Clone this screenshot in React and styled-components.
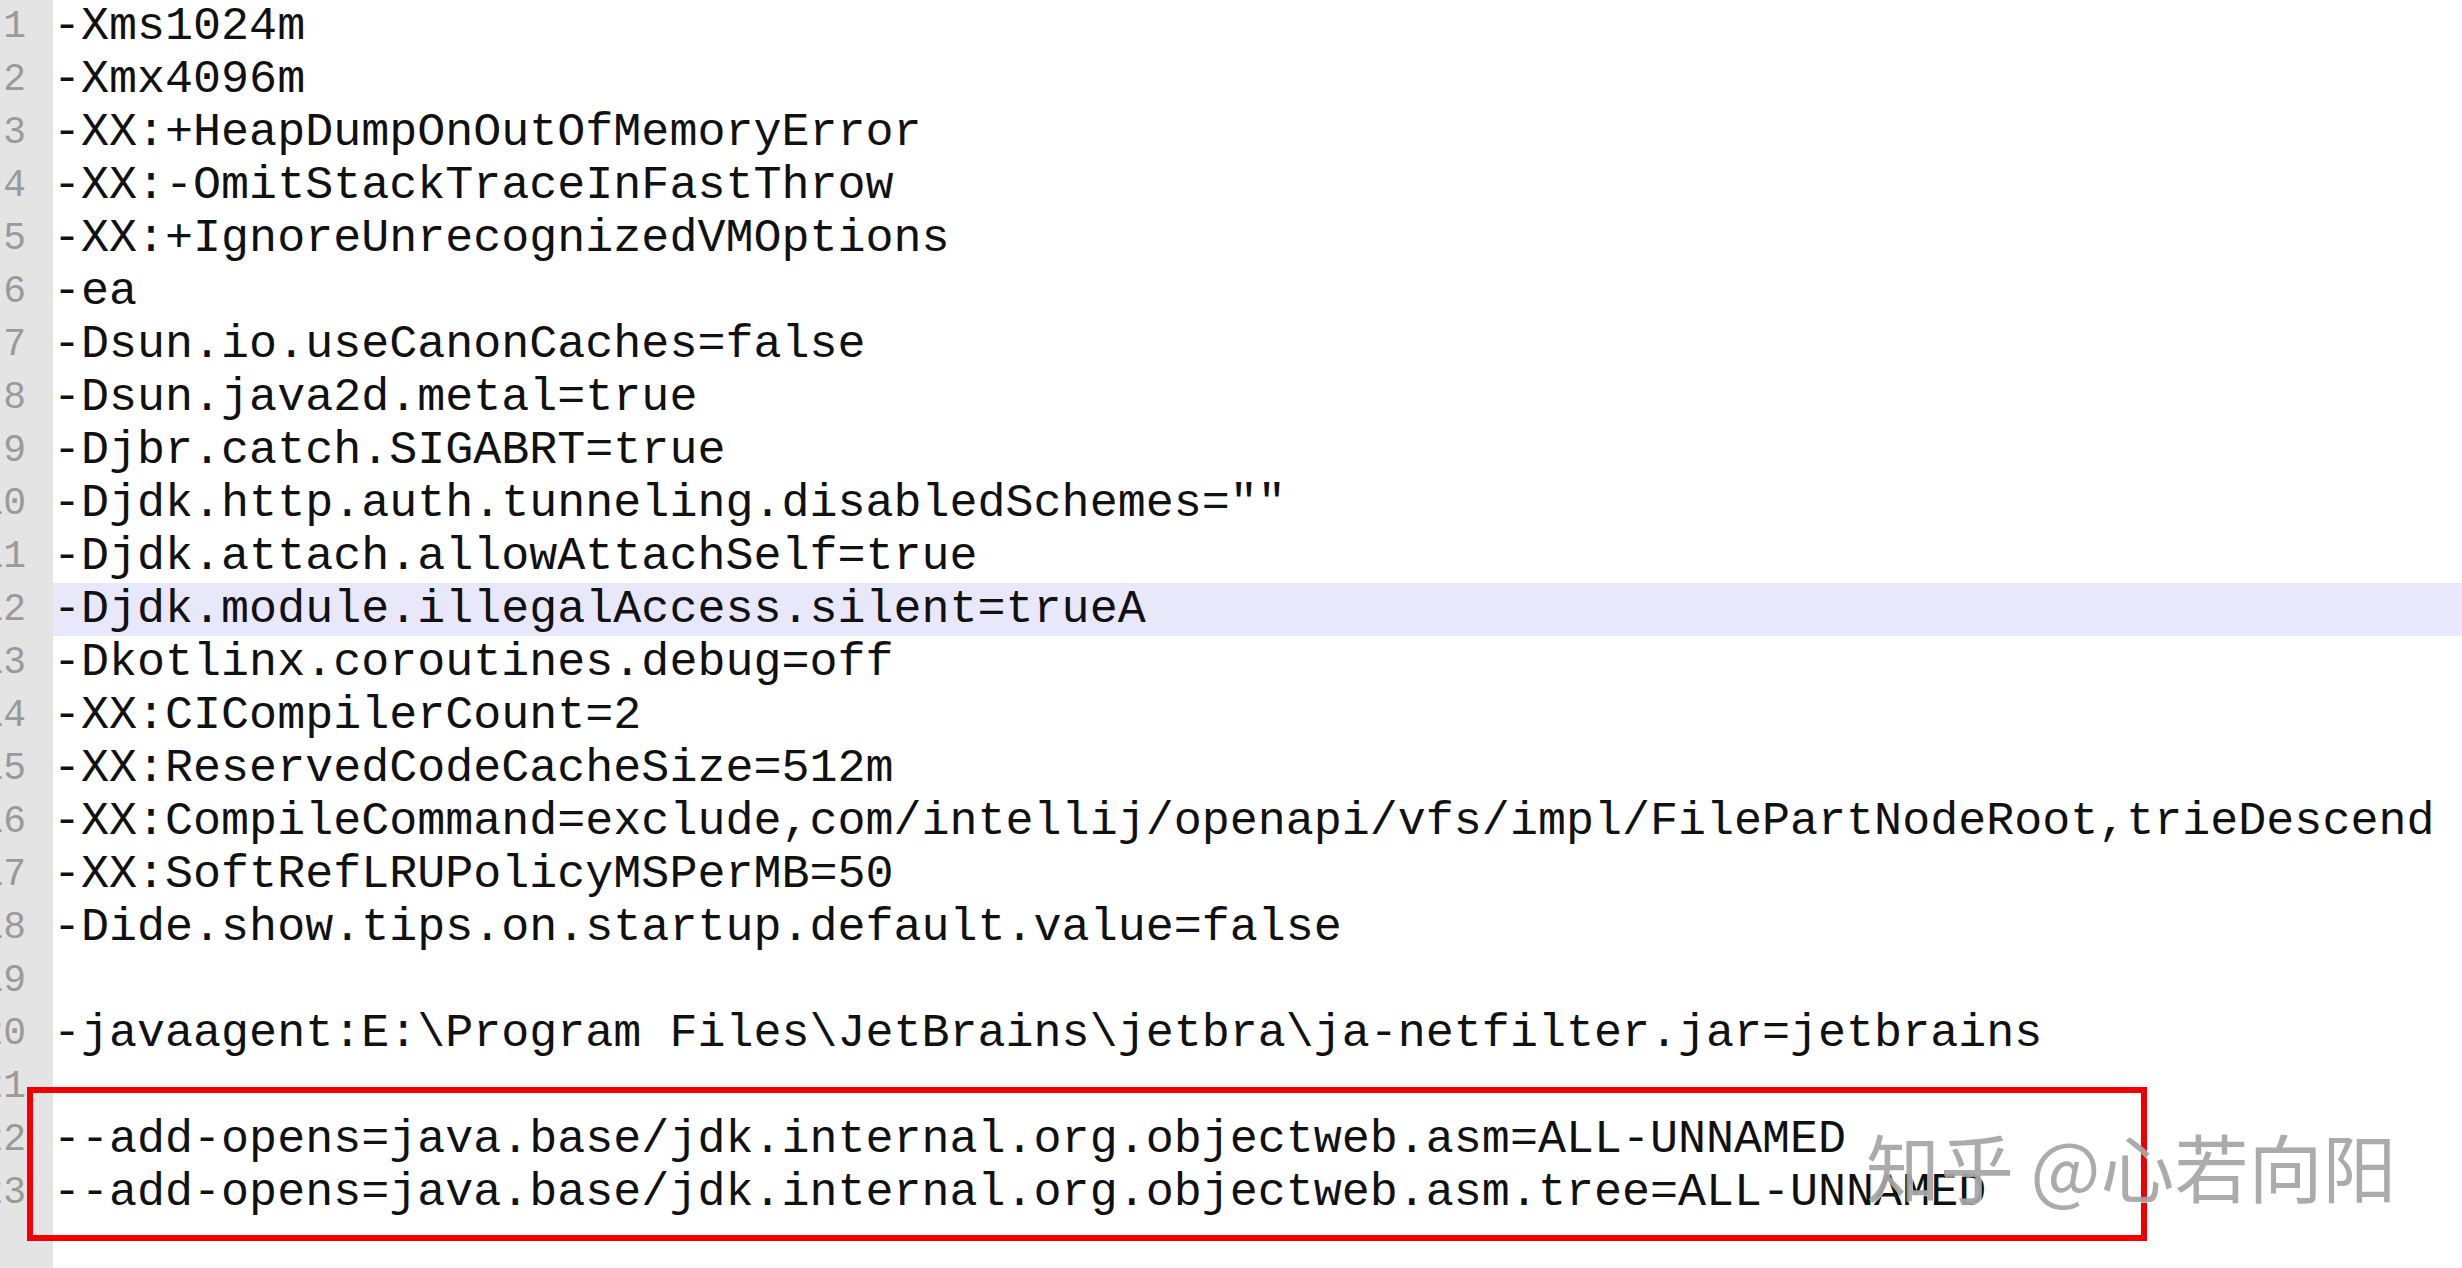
import React from "react";
import styled, { createGlobalStyle } from "styled-components";

const Global = createGlobalStyle`
  html, body {
    margin: 0;
    padding: 0;
    background: #ffffff;
    overflow: hidden;
  }
  #root {
    width: 2462px;
    height: 1268px;
  }
`;

const LINE_H = 53;

const Editor = styled.div`
  position: relative;
  display: flex;
  width: 2462px;
  height: 1268px;
  background: #ffffff;
  overflow: hidden;
`;

const Gutter = styled.div`
  flex: 0 0 53px;
  display: flex;
  flex-direction: column;
  background: #e4e4e4;
  overflow: hidden;
`;

const LineNumber = styled.div`
  height: ${LINE_H}px;
  display: flex;
  justify-content: flex-end;
  padding-right: 27px;
  overflow: hidden;
  font-family: "Liberation Mono", "Courier New", monospace;
  font-size: 38px;
  line-height: ${LINE_H}px;
  color: #9a9a9a;
  white-space: nowrap;
`;

const Code = styled.div`
  flex: 1 1 auto;
  display: flex;
  flex-direction: column;
  min-width: 0;
`;

const CodeLine = styled.div`
  height: ${LINE_H}px;
  font-family: "Liberation Mono", "Courier New", monospace;
  font-size: 46.7px;
  line-height: ${LINE_H}px;
  color: #111111;
  white-space: pre;
  background: ${(p) => (p.$active ? "#e8e8fa" : "transparent")};
`;

const Highlight = styled.div`
  position: absolute;
  left: 27px;
  top: 1087px;
  width: 2120px;
  height: 154px;
  box-sizing: border-box;
  border: 6px solid #f20000;
  pointer-events: none;
`;

const Watermark = styled.div`
  position: absolute;
  left: 1866px;
  top: 1122px;
  font-family: "Noto Sans CJK SC", "Noto Sans", sans-serif;
  font-size: 74px;
  line-height: 86px;
  color: rgba(150, 150, 150, 0.8);
  text-shadow: 1px 1px 0 rgba(255, 255, 255, 0.7);
  white-space: pre;
  pointer-events: none;
`;

const lines = [
  "-Xms1024m",
  "-Xmx4096m",
  "-XX:+HeapDumpOnOutOfMemoryError",
  "-XX:-OmitStackTraceInFastThrow",
  "-XX:+IgnoreUnrecognizedVMOptions",
  "-ea",
  "-Dsun.io.useCanonCaches=false",
  "-Dsun.java2d.metal=true",
  "-Djbr.catch.SIGABRT=true",
  '-Djdk.http.auth.tunneling.disabledSchemes=""',
  "-Djdk.attach.allowAttachSelf=true",
  "-Djdk.module.illegalAccess.silent=trueA",
  "-Dkotlinx.coroutines.debug=off",
  "-XX:CICompilerCount=2",
  "-XX:ReservedCodeCacheSize=512m",
  "-XX:CompileCommand=exclude,com/intellij/openapi/vfs/impl/FilePartNodeRoot,trieDescend",
  "-XX:SoftRefLRUPolicyMSPerMB=50",
  "-Dide.show.tips.on.startup.default.value=false",
  "",
  "-javaagent:E:\\Program Files\\JetBrains\\jetbra\\ja-netfilter.jar=jetbrains",
  "",
  "--add-opens=java.base/jdk.internal.org.objectweb.asm=ALL-UNNAMED",
  "--add-opens=java.base/jdk.internal.org.objectweb.asm.tree=ALL-UNNAMED",
];

const ACTIVE = 11;

export default function App() {
  return (
    <>
      <Global />
      <Editor>
        <Gutter>
          {lines.map((_, i) => (
            <LineNumber key={i}>{i + 1}</LineNumber>
          ))}
        </Gutter>
        <Code>
          {lines.map((t, i) => (
            <CodeLine key={i} $active={i === ACTIVE}>
              {t}
            </CodeLine>
          ))}
        </Code>
        <Highlight />
        <Watermark>知乎 @心若向阳</Watermark>
      </Editor>
    </>
  );
}
